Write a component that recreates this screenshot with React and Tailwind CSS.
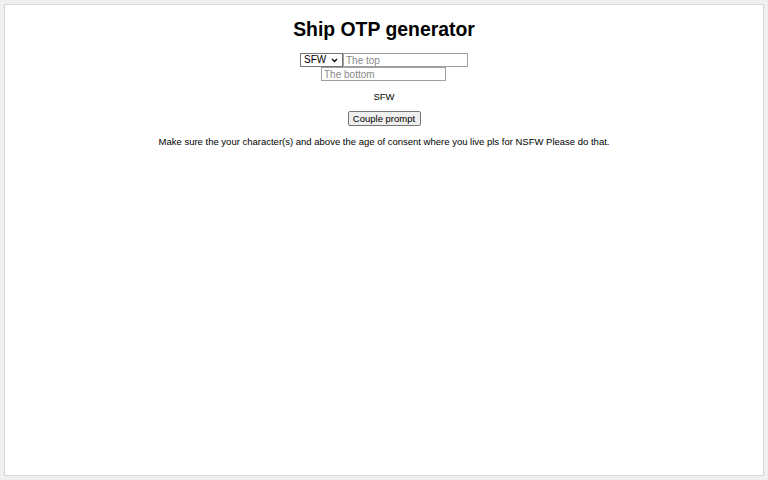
import { useState } from 'react'

export default function App() {
  const [rating, setRating] = useState('SFW')
  const [top, setTop] = useState('')
  const [bottom, setBottom] = useState('')
  const [result, setResult] = useState('SFW')

  return (
    <div className="h-[480px] w-[768px] bg-[#f0f0f0] p-[4px]" style={{ fontFamily: 'Arial, "Liberation Sans", sans-serif' }}>
      <div className="flex h-full flex-col items-center border border-[#d8d8d8] bg-white text-[9.5px] text-black">
        <h1 className="mt-[12px] text-[19.4px] font-bold leading-[24px]">Ship OTP generator</h1>

        <div className="mt-[12px] flex flex-col items-center">
          <div className="flex items-center">
            <div className="relative">
              <select
                value={rating}
                onChange={(e) => setRating(e.target.value)}
                className="block h-[14px] w-[43px] appearance-none border border-[#767676] bg-white pl-[3px] text-[10px] leading-[12px]"
              >
                <option>SFW</option>
                <option>NSFW</option>
              </select>
              <svg className="pointer-events-none absolute right-[5px] top-[5px]" width="7" height="5" viewBox="0 0 7 5">
                <path d="M1 1l2.5 2.5L6 1" fill="none" stroke="#000" strokeWidth="1.3" />
              </svg>
            </div>
            <input
              value={top}
              onChange={(e) => setTop(e.target.value)}
              placeholder="The top"
              className="h-[14px] w-[125px] border border-[#a0a0a0] px-[2px] text-[10px] leading-[12px] placeholder:text-[#888]"
            />
          </div>
          <input
            value={bottom}
            onChange={(e) => setBottom(e.target.value)}
            placeholder="The bottom"
            className="-ml-[1px] h-[14px] w-[125px] border border-[#a0a0a0] px-[2px] text-[10px] leading-[12px] placeholder:text-[#888]"
          />
        </div>

        <p className="mt-[10px] leading-[12px]">{result}</p>

        <button
          type="button"
          onClick={() => setResult(rating)}
          className="mt-[8px] h-[15px] w-[73px] rounded-[2px] border border-[#767676] bg-[#efefef] text-[9.5px] leading-[12px]"
        >
          Couple prompt
        </button>

        <p className="mt-[10px] leading-[12px]">
          Make sure the your character(s) and above the age of consent where you live pls for NSFW Please do that.
        </p>
      </div>
    </div>
  )
}
